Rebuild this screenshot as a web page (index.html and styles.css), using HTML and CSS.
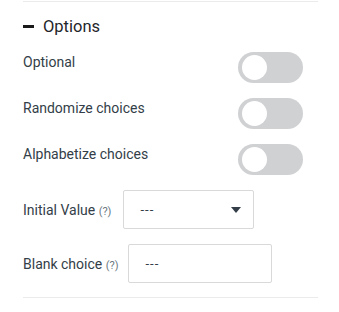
FILE: index.html
```html
<!DOCTYPE html>
<html>
<head>
<meta charset="utf-8">
<link rel="stylesheet" href="styles.css">
</head>
<body>
<div class="panel">
  <div class="heading">
    <span class="dash"></span>
    <span class="title">Options</span>
  </div>
  <div class="rows">
    <div class="row toggle-row">
      <span class="label">Optional</span>
      <span class="toggle"><span class="knob"></span></span>
    </div>
    <div class="row toggle-row">
      <span class="label">Randomize choices</span>
      <span class="toggle"><span class="knob"></span></span>
    </div>
    <div class="row toggle-row">
      <span class="label">Alphabetize choices</span>
      <span class="toggle"><span class="knob"></span></span>
    </div>
    <div class="row field-row">
      <span class="label">Initial Value <span class="help">(?)</span></span>
      <div class="select">
        <span class="value">---</span>
        <span class="arrow"></span>
      </div>
    </div>
    <div class="row field-row">
      <span class="label">Blank choice <span class="help">(?)</span></span>
      <div class="input"><span class="value">---</span></div>
    </div>
  </div>
</div>
</body>
</html>
```

FILE: styles.css
```css
html, body {
  margin: 0;
  padding: 0;
  background: #ffffff;
}
body {
  font-family: Roboto, "Liberation Sans", Arial, sans-serif;
  color: #333e48;
}
.panel {
  margin: 1px 0 0 23px;
  width: 295px;
  border-top: 1px solid #ebebeb;
  border-bottom: 1px solid #ebebeb;
  padding-bottom: 14px;
}
.heading {
  display: flex;
  align-items: center;
  height: 20px;
  margin-top: 14px;
}
.dash {
  width: 11px;
  height: 3px;
  background: #1a1a1a;
  margin-right: 9px;
}
.title {
  font-size: 16.5px;
  color: #1f262b;
}
.rows {
  display: flex;
  flex-direction: column;
  gap: 15px;
  margin-top: 16px;
}
.row {
  display: flex;
  align-items: center;
}
.toggle-row {
  justify-content: space-between;
  width: 280px;
}
.toggle-row .label {
  margin-bottom: 11px;
}
.label {
  font-size: 14px;
  color: #333e48;
}
.help {
  font-size: 11px;
  color: #6b787f;
}
.toggle {
  width: 65px;
  height: 31px;
  border-radius: 16px;
  background: #d0d1d3;
  display: flex;
  align-items: center;
  padding-left: 4px;
  box-sizing: border-box;
}
.knob {
  width: 25px;
  height: 25px;
  border-radius: 50%;
  background: #ffffff;
}
.select, .input {
  height: 39px;
  box-sizing: border-box;
  border: 1px solid #d9d9d9;
  border-radius: 2px;
  display: flex;
  align-items: center;
}
.select {
  width: 131px;
  margin-left: 12px;
  padding: 0 12px 0 16px;
  justify-content: space-between;
}
.input {
  width: 144px;
  margin-left: 9px;
  padding-left: 17px;
}
.value {
  font-size: 13px;
  letter-spacing: 1px;
  color: #333e48;
}
.arrow {
  width: 0;
  height: 0;
  border-left: 5px solid transparent;
  border-right: 5px solid transparent;
  border-top: 6px solid #333e48;
}
```
